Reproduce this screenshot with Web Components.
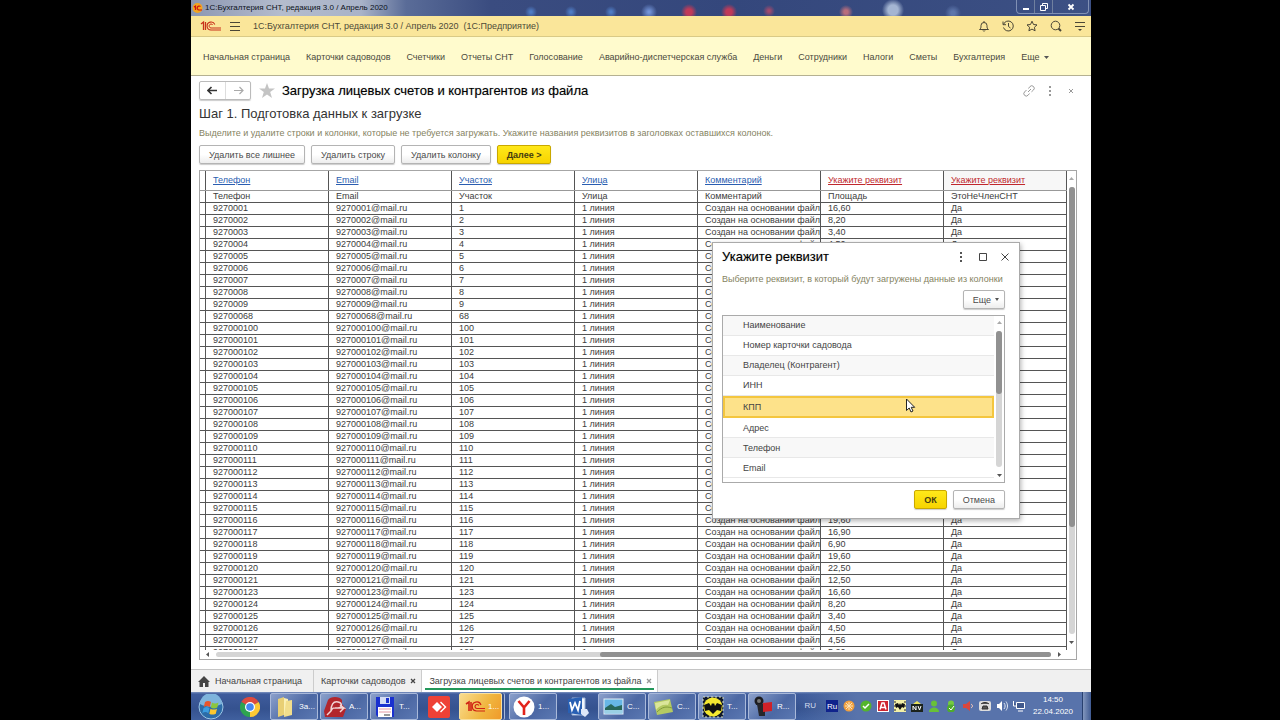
<!DOCTYPE html>
<html lang="ru">
<head>
<meta charset="utf-8">
<meta name="viewport" content="width=device-width, initial-scale=1">
<title>1С:Бухгалтерия СНТ, редакция 3.0 / Апрель 2020</title>
<style>
  body {
    margin: 0;
    height: 100vh;
    display: grid;
    grid-template-columns: 191px minmax(0, 1fr) 189px;
    background: #000;
    font-family: "Liberation Sans", Arial, sans-serif;
    font-size: 9px;
    line-height: 12px;
    color: #444;
    overflow: hidden;
  }
  desktop-screen {
    grid-column: 2;
  }
</style>
</head>
<body>
<desktop-screen>
  <window-title slot="top">1С:Бухгалтерия СНТ, редакция 3.0 / Апрель 2020</window-title>
  <app-bar slot="top">1С:Бухгалтерия СНТ, редакция 3.0 / Апрель 2020&nbsp; (1С:Предприятие)</app-bar>
  <section-nav slot="top"></section-nav>
  <form-page>
    <span slot="title">Загрузка лицевых счетов и контрагентов из файла</span>
    <span slot="step">Шаг 1. Подготовка данных к загрузке</span>
    <span slot="hint">Выделите и удалите строки и колонки, которые не требуется загружать. Укажите названия реквизитов в заголовках оставшихся колонок.</span>
    <push-button slot="actions">Удалить все лишнее</push-button>
    <push-button slot="actions">Удалить строку</push-button>
    <push-button slot="actions">Удалить колонку</push-button>
    <push-button slot="actions" primary>Далее &gt;</push-button>
    <data-grid></data-grid>
  </form-page>
  <field-dialog slot="overlay"></field-dialog>
  <open-tabs slot="bottom"></open-tabs>
  <task-bar slot="bottom"></task-bar>
</desktop-screen>

<script>
class BaseElement extends HTMLElement {
  constructor() {
    super();
    this.shadowDOM = this.attachShadow({ mode: 'open' });
    this.shadowDOM.innerHTML = this.render();
  }
}

class DesktopScreen extends BaseElement {
  render() {
    return `
      <style>
        :host {
          display: flex;
          flex-direction: column;
          position: relative;
          min-width: 0;
          height: 100vh;
          background: #fff;
        }
        main {
          flex: 1;
          min-height: 0;
          display: flex;
        }
      </style>
      <slot name="top"></slot>
      <main><slot></slot></main>
      <slot name="bottom"></slot>
      <slot name="overlay"></slot>
    `;
  }
}

class WindowTitle extends BaseElement {
  render() {
    return `
      <style>
        :host {
          display: flex;
          align-items: center;
          height: 16px;
          padding-left: 1px;
          box-sizing: border-box;
          font-size: 8px;
          color: #0c1220;
          background:
            radial-gradient(circle at 458px 12px, #7394d8 1px, transparent 8px),
            radial-gradient(circle at 498px 12px, #c03a58 3px, transparent 8px),
            radial-gradient(circle at 538px 12px, #c03a58 3px, transparent 8px),
            radial-gradient(circle at 578px 11px, #a34a6c 1px, transparent 6px),
            radial-gradient(circle at 655px 12px, #b86d7c 2px, transparent 7px),
            radial-gradient(circle at 702px 10px, #a4b5d2 5px, transparent 11px),
            radial-gradient(circle at 762px 13px, #5d76ab 2px, transparent 8px),
            radial-gradient(circle at 340px 12px, #4f7cc4 1px, transparent 6px),
            radial-gradient(circle at 380px 12px, #4f7cc4 1px, transparent 6px),
            radial-gradient(circle at 420px 12px, #4f7cc4 1px, transparent 6px),
            radial-gradient(ellipse at 240px 10px, #1e2b54 4px, transparent 26px),
            linear-gradient(90deg, #8c97b2 0, #b4bccd 90px, #a9b3c8 170px, #5a6c98 215px, #3a4c80 300px, #34477c 60%, #3c5084 100%);
        }
        svg {
          display: block;
          flex: none;
          margin-right: 2px;
        }
        .text {
          flex: 1;
          white-space: nowrap;
        }
        .controls {
          display: flex;
          height: 13px;
          align-self: flex-start;
          margin-right: 2px;
          border: 1px solid #8090b4;
          border-top: 0;
          border-radius: 0 0 4px 4px;
        }
        button {
          display: grid;
          place-items: center;
          width: 18px;
          padding: 0;
          border: 0;
          border-right: 1px solid #70809f;
          background: none;
        }
        button:last-child {
          width: 35px;
          border-right: 0;
        }
        button svg {
          margin: 0;
        }
      </style>
      <svg width="11" height="12" viewBox="0 0 11 12">
        <circle cx="5.500" cy="6" r="5" fill="#f3a51f"/>
        <path d="M2 5l1.500-1v4M8.500 4.500a2 2 0 1 0-1.500 3.500h3" fill="none" stroke="#c11" stroke-width="1.200"/>
      </svg>
      <span class="text"><slot></slot></span>
      <div class="controls">
        <button aria-label="Свернуть"><svg width="10" height="10"><path d="M2 7h6" stroke="#fff" stroke-width="2"/></svg></button>
        <button aria-label="Восстановить"><svg width="10" height="10"><path d="M3.500 3V1.500h5v5H7M1.500 3.500h5v5h-5z" fill="none" stroke="#fff"/></svg></button>
        <button aria-label="Закрыть"><svg width="10" height="10"><path d="M2.500 2.500l5 5M7.500 2.500l-5 5" stroke="#fff" stroke-width="1.800"/></svg></button>
      </div>
    `;
  }
}

class AppBar extends BaseElement {
  render() {
    return `
      <style>
        :host {
          display: flex;
          align-items: center;
          height: 21px;
          box-sizing: border-box;
          padding: 0 5px 0 9px;
          background: #fae69a;
          border-bottom: 1px solid #d9ca86;
          color: #4d4a38;
        }
        svg {
          display: block;
          fill: none;
          stroke: #4a4636;
        }
        .menu {
          margin: 0 12px 0 7px;
        }
        .text {
          flex: 1;
          white-space: nowrap;
        }
        button {
          padding: 0;
          border: 0;
          background: none;
        }
        .tools {
          display: flex;
          gap: 12px;
        }
      </style>
      <svg width="22" height="12" viewBox="0 0 22 12" style="stroke:#c8301c">
        <path d="M1 4l2.500-2v8M5.500 2v8" stroke-width="1.300"/>
        <path d="M14.800 4.500a4 4 0 1 0-3.800 5.500h10" stroke-width="1.100"/>
        <path d="M12.800 5a2 2 0 1 0-1.800 3h10" stroke-width="1"/>
      </svg>
      <button class="menu" aria-label="Меню"><svg width="12" height="12"><path d="M1 2.500h10M1 6.500h10M1 10.500h10"/></svg></button>
      <span class="text"><slot></slot></span>
      <div class="tools">
        <button aria-label="Уведомления"><svg width="12" height="12"><path d="M1.500 9.500c1.500-1 1.500-2 1.500-4a3 3 0 0 1 6 0c0 2 0 3 1.500 4zM5 10.500c.5 1 1.500 1 2 0M6 1v1.500"/></svg></button>
        <button aria-label="История"><svg width="12" height="12"><path d="M1.500 4.500a5 5 0 1 1 0 3M1 1.500v3.200h3M6.500 3v3.500l2 1.500"/></svg></button>
        <button aria-label="Избранное"><svg width="12" height="12"><path d="M6 1.200l1.500 3.300 3.500.4-2.600 2.400.7 3.500L6 9.100 2.900 10.800l.7-3.500L1 4.900l3.500-.4z"/></svg></button>
        <button aria-label="Поиск"><svg width="12" height="12"><circle cx="5.500" cy="5.500" r="4.300"/><path d="M8.500 8.500l2.500 2.500" stroke-width="2"/></svg></button>
        <button aria-label="Сервис"><svg width="12" height="12"><path d="M1 2.500h10M1 6.500h10"/><path d="M4 9h4l-2 2z" fill="#4a4636" stroke="none"/></svg></button>
      </div>
    `;
  }
}

class SectionNav extends BaseElement {
  render() {
    const sections = ['Начальная страница', 'Карточки садоводов', 'Счетчики', 'Отчеты СНТ', 'Голосование',
      'Аварийно-диспетчерская служба', 'Деньги', 'Сотрудники', 'Налоги', 'Сметы', 'Бухгалтерия'];
    return `
      <style>
        :host {
          display: block;
          background: #fffbcd;
          border-bottom: 1px solid #b5b192;
        }
        nav {
          display: flex;
          align-items: center;
          gap: 16px;
          box-sizing: border-box;
          height: 38px;
          padding: 2px 0 0 12px;
          white-space: nowrap;
        }
        a, button {
          color: #4b4a3d;
          text-decoration: none;
        }
        button {
          display: flex;
          align-items: center;
          gap: 4px;
          padding: 0;
          border: 0;
          background: none;
          font: inherit;
        }
      </style>
      <nav>
        ${sections.map((name) => `<a href="#">${name}</a>`).join('')}
        <button>Еще <svg width="5" height="3"><path d="M0 0h5l-2.500 3z" fill="#555"/></svg></button>
      </nav>
    `;
  }
}

class PushButton extends BaseElement {
  render() {
    return `
      <style>
        :host {
          display: block;
        }
        button {
          display: flex;
          align-items: center;
          gap: 4px;
          height: 19px;
          box-sizing: border-box;
          padding: 0 9px;
          border: 1px solid #b4b4b4;
          border-radius: 2px;
          background: linear-gradient(#fff 50%, #ededed);
          box-shadow: 0 1px 1px #ccc;
          font: inherit;
          color: #4a4a4a;
          white-space: nowrap;
        }
        :host([menu]) button {
          padding: 0 5px 0 9px;
        }
        :host([primary]) button {
          border-color: #c9a800;
          background: linear-gradient(#ffe81a, #f7d400);
          color: #443c10;
          font-weight: bold;
        }
      </style>
      <button><slot></slot></button>
    `;
  }
}

class FormPage extends BaseElement {
  render() {
    return `
      <style>
        :host {
          flex: 1;
          min-width: 0;
          display: flex;
          flex-direction: column;
          padding: 5px 14px 9px 8px;
        }
        header {
          display: flex;
          align-items: center;
          height: 19px;
        }
        .history {
          display: flex;
          height: 19px;
          box-sizing: border-box;
          border: 1px solid #bbb;
          border-radius: 2px;
          box-shadow: 0 1px 1px #ccc;
        }
        .history button {
          width: 25px;
        }
        .history button + button {
          border-left: 1px solid #ddd;
        }
        button {
          display: grid;
          place-items: center;
          padding: 0;
          border: 0;
          background: none;
        }
        .star {
          margin: 0 7px 0 8px;
        }
        h1, h2, p {
          margin: 0;
          font-weight: normal;
          white-space: nowrap;
        }
        h1 {
          flex: 1;
          font-size: 13px;
          color: #000;
          text-shadow: 0 0 1px #aaa;
        }
        h2 {
          margin-top: 5px;
          font-size: 13px;
          line-height: 18px;
          color: #333;
        }
        p {
          margin-top: 4px;
          color: #85835f;
        }
        .tools {
          display: flex;
          gap: 9px;
        }
        .actions {
          display: flex;
          gap: 6px;
          margin: 6px 0;
        }
      </style>
      <header>
        <div class="history">
          <button aria-label="Назад"><svg width="11" height="9"><path d="M1 4.500h9M4.500 1L1 4.500 4.500 8" fill="none" stroke="#333" stroke-width="1.600"/></svg></button>
          <button aria-label="Вперед"><svg width="11" height="9"><path d="M1 4.500h9M6.500 1L10 4.500 6.500 8" fill="none" stroke="#aaa" stroke-width="1.200"/></svg></button>
        </div>
        <button class="star" aria-label="В избранное"><svg width="16" height="15"><path d="M8 0l2 5.500h6l-4.800 3.500L13 15l-5-3.500L3 15l1.800-6L0 5.500h6z" fill="#c4c4c4"/></svg></button>
        <h1><slot name="title"></slot></h1>
        <div class="tools">
          <button aria-label="Ссылка"><svg width="12" height="12" fill="none" stroke="#999"><path d="M5 7L8 4M5.500 3.500l1.500-2a2.400 2.400 0 0 1 3.500 3.500L8.500 6.800M6.500 8.500L5 10.300A2.400 2.400 0 0 1 1.500 7l2-2"/></svg></button>
          <button aria-label="Еще"><svg width="12" height="12" fill="#999"><path d="M5 1h2v2H5zM5 5h2v2H5zM5 9h2v2H5z"/></svg></button>
          <button aria-label="Закрыть"><svg width="12" height="12" stroke="#999"><path d="M4 4l4 4M8 4l-4 4"/></svg></button>
        </div>
      </header>
      <h2><slot name="step"></slot></h2>
      <p><slot name="hint"></slot></p>
      <div class="actions"><slot name="actions"></slot></div>
      <slot></slot>
    `;
  }
}

class DataGrid extends BaseElement {
  render() {
    const columns = ['Телефон', 'Email', 'Участок', 'Улица', 'Комментарий'];
    const plots = [1, 2, 3, 4, 5, 6, 7, 8, 9, 68];
    for (let n = 100; n <= 128; n++) {
      if (n !== 122) plots.push(n);
    }
    const areas = {
      1: '16,60', 2: '8,20', 3: '3,40', 4: '4,50', 116: '19,60', 117: '16,90', 118: '6,90', 119: '19,60',
      120: '22,50', 121: '12,50', 123: '16,60', 124: '8,20', 125: '3,40', 126: '4,50', 127: '4,56', 128: '5,20'
    };
    const rows = plots.map((n) => {
      const phone = '927000' + n;
      return [phone, phone + '@mail.ru', n, '1 линия', 'Создан на основании файл', areas[n] || '', 'Да'];
    });
    rows.unshift([...columns, 'Площадь', 'ЭтоНеЧленСНТ']);
    return `
      <style>
        :host {
          flex: 1;
          min-height: 0;
          display: grid;
          grid-template-columns: minmax(0, 1fr) 9px;
          grid-template-rows: minmax(0, 1fr) 9px;
          border: 1px solid #a6a6a6;
        }
        .view {
          overflow: hidden;
        }
        table {
          width: 100%;
          table-layout: fixed;
          border-collapse: collapse;
          line-height: 11px;
          color: #3c3c3c;
        }
        th, td {
          height: 11px;
          padding: 0 0 0 7px;
          border: 1px solid #555;
          border-top: 0;
          font-weight: normal;
          text-align: left;
          white-space: nowrap;
          overflow: hidden;
        }
        th {
          height: 19px;
          border-bottom-color: #999;
        }
        th:last-child {
          background: #f7f7f7;
        }
        th:first-child, td:first-child {
          width: 5px;
          padding: 0;
          border-left: 0;
        }
        a {
          color: #2a5db0;
        }
        a.unset {
          color: #c0272d;
        }
        .vertical, .horizontal {
          display: flex;
          align-items: center;
        }
        .vertical {
          flex-direction: column;
          padding: 6px 0;
          gap: 7px;
        }
        .horizontal {
          padding: 0 6px;
          gap: 7px;
        }
        .track {
          flex: 1;
          display: flex;
          border-radius: 3px;
          background: #d5d5d5;
        }
        .vertical .track {
          width: 6px;
          flex-direction: column;
        }
        .horizontal .track {
          height: 5px;
          justify-content: flex-end;
        }
        .thumb {
          border-radius: 3px;
          background: #919191;
        }
        .vertical .thumb {
          height: 76%;
        }
        .horizontal .thumb {
          width: 54%;
        }
      </style>
      <div class="view">
        <table>
          <thead>
            <tr>
              <th></th>
              ${columns.map((name) => `<th><a href="#">${name}</a></th>`).join('')}
              <th><a class="unset" href="#">Укажите реквизит</a></th>
              <th><a class="unset" href="#">Укажите реквизит</a></th>
            </tr>
          </thead>
          <tbody>
            ${rows.map((row) => `<tr><td></td>${row.map((cell) => `<td>${cell}</td>`).join('')}</tr>`).join('')}
          </tbody>
        </table>
      </div>
      <div class="vertical">
        <svg width="5" height="3"><path d="M0 3h5L2.500 0z" fill="#aaa"/></svg>
        <div class="track"><div class="thumb"></div></div>
        <svg width="5" height="3"><path d="M0 0h5L2.500 3z" fill="#555"/></svg>
      </div>
      <div class="horizontal">
        <svg width="3" height="5"><path d="M3 0v5L0 2.500z" fill="#555"/></svg>
        <div class="track"><div class="thumb"></div></div>
        <svg width="3" height="5"><path d="M0 0v5l3-2.500z" fill="#555"/></svg>
      </div>
    `;
  }
}

class FieldDialog extends BaseElement {
  render() {
    const fields = ['Наименование', 'Номер карточки садовода', 'Владелец (Контрагент)', 'ИНН', 'КПП', 'Адрес', 'Телефон', 'Email'];
    return `
      <style>
        :host {
          position: absolute;
          left: 521px;
          top: 242px;
          width: 308px;
          height: 277px;
          box-sizing: border-box;
          display: flex;
          flex-direction: column;
          padding: 5px 14px 9px 9px;
          background: #fff;
          border: 1px solid #aaa;
          box-shadow: 1px 2px 5px rgba(0, 0, 0, 0.3);
        }
        header {
          display: flex;
          align-items: center;
          gap: 10px;
          height: 18px;
          margin-right: -6px;
        }
        h2 {
          flex: 1;
          margin: 0;
          font-size: 13px;
          font-weight: normal;
          color: #000;
          text-shadow: 0 0 1px #aaa;
        }
        header button {
          display: grid;
          padding: 0;
          border: 0;
          background: none;
        }
        p {
          margin: 7px 0 5px;
          color: #85835f;
          white-space: nowrap;
        }
        .more {
          align-self: flex-end;
        }
        .list {
          flex: 1;
          display: flex;
          min-height: 0;
          margin: 6px 0 7px;
          border: 1px solid #aaa;
        }
        ul {
          flex: 1;
          display: flex;
          flex-direction: column;
          margin: 0;
          padding: 0 0 4px;
          list-style: none;
        }
        li {
          flex: 1;
          display: flex;
          align-items: center;
          box-sizing: border-box;
          padding-left: 20px;
          border-bottom: 1px solid #e8e8e8;
        }
        li:nth-child(odd) {
          background: #f8f8f8;
        }
        li[aria-selected="true"] {
          padding-left: 18px;
          border: 2px solid #f4c63e;
          background: #fde28a;
        }
        .scroll {
          display: flex;
          flex-direction: column;
          align-items: center;
          gap: 7px;
          width: 10px;
          padding: 5px 0;
        }
        .track {
          flex: 1;
          width: 6px;
          border-radius: 3px;
          background: #d5d5d5;
        }
        .thumb {
          height: 46%;
          border-radius: 3px;
          background: #919191;
        }
        footer {
          display: flex;
          justify-content: flex-end;
          gap: 6px;
        }
        .cursor {
          position: absolute;
          left: 192px;
          top: 155px;
        }
      </style>
      <header>
        <h2>Укажите реквизит</h2>
        <button aria-label="Еще"><svg width="12" height="12" fill="#555"><path d="M5 1h2v2H5zM5 5h2v2H5zM5 9h2v2H5z"/></svg></button>
        <button aria-label="Развернуть"><svg width="12" height="12"><path d="M2.500 2.500h7v7h-7z" fill="none" stroke="#444"/></svg></button>
        <button aria-label="Закрыть"><svg width="12" height="12"><path d="M2.500 2.500l7 7M9.500 2.500l-7 7" stroke="#444"/></svg></button>
      </header>
      <p>Выберите реквизит, в который будут загружены данные из колонки</p>
      <push-button class="more" menu>Еще<svg width="4" height="3"><path d="M0 0h4L2 3z" fill="#555"/></svg></push-button>
      <div class="list">
        <ul role="listbox" aria-label="Реквизиты">
          ${fields.map((name) => `<li role="option" aria-selected="${name === 'КПП'}">${name}</li>`).join('')}
        </ul>
        <div class="scroll">
          <svg width="5" height="3"><path d="M0 3h5L2.500 0z" fill="#aaa"/></svg>
          <div class="track"><div class="thumb"></div></div>
          <svg width="5" height="3"><path d="M0 0h5L2.500 3z" fill="#555"/></svg>
        </div>
      </div>
      <footer>
        <push-button primary>ОК</push-button>
        <push-button>Отмена</push-button>
      </footer>
      <svg class="cursor" width="12" height="16"><path d="M1.500 1v11.500l2.700-2.500 1.800 4 2-1-1.800-3.700h3.500z" fill="#fff" stroke="#222"/></svg>
    `;
  }
}

class OpenTabs extends BaseElement {
  render() {
    const close = (color) => `<button aria-label="Закрыть"><svg width="6" height="6"><path d="M1 1l4 4M5 1L1 5" stroke="${color}" stroke-width="1.300"/></svg></button>`;
    return `
      <style>
        :host {
          display: flex;
          height: 22px;
          border-top: 1px solid #c4c4c4;
          background: #f0f0f0;
          white-space: nowrap;
        }
        .tab {
          display: flex;
          align-items: center;
          gap: 5px;
          padding: 0 5px 0 7px;
          border-right: 1px solid #ccc;
        }
        .tab.home {
          padding-right: 11px;
        }
        .tab.active {
          background: #fff linear-gradient(#23975a, #23975a) 3px 18px / calc(100% - 6px) 2px no-repeat;
        }
        a {
          color: #444;
          text-decoration: none;
        }
        button {
          display: grid;
          padding: 0;
          border: 0;
          background: none;
        }
      </style>
      <div class="tab home">
        <svg width="12" height="11"><path d="M6 0L0 6h1.500v5H5V7h2v4h3.500V6H12z" fill="#444"/></svg>
        <a href="#">Начальная страница</a>
      </div>
      <div class="tab"><a href="#">Карточки садоводов</a>${close('#444')}</div>
      <div class="tab active"><a href="#">Загрузка лицевых счетов и контрагентов из файла</a>${close('#999')}</div>
    `;
  }
}

class TaskButton extends BaseElement {
  render() {
    return `
      <style>
        :host {
          display: flex;
          flex: none;
          width: 50px;
          font-size: 8px;
        }
        :host([pinned]) {
          width: 39px;
        }
        button {
          flex: 1;
          display: grid;
          grid-template-columns: 22px auto;
          gap: 3px;
          align-items: center;
          justify-content: start;
          min-width: 0;
          margin: 1px 1px 0 1px;
          padding: 0 0 0 3px;
          border: 1px solid #a9b9da;
          border-radius: 2px;
          background: linear-gradient(135deg, #8ba0cb, #4c68a4 60%, #5b78b2);
          font: inherit;
          color: #fff;
        }
        ::slotted(svg) {
          display: block;
          justify-self: center;
        }
        :host([pinned]) button {
          grid-template-columns: auto;
          justify-content: center;
          padding: 0;
          border-color: transparent;
          background: none;
        }
        :host([active]) button {
          margin-right: 6px;
          border-color: #f7e0a0;
          background: linear-gradient(120deg, #f9dc8e, #f0b53e 60%, #f09a2a);
          box-shadow: 2px 0 0 #34508c, 3px 0 0 #a9b9da;
        }
      </style>
      <button><slot name="icon"></slot><slot></slot></button>
    `;
  }
}

class TaskBar extends BaseElement {
  render() {
    return `
      <style>
        :host {
          display: flex;
          align-items: stretch;
          height: 28px;
          background: linear-gradient(#7d93c0 0, #3f5c9c 2px, #35528f 60%, #40609f);
          color: #fff;
        }
        svg {
          display: block;
          flex: none;
        }
        .tray {
          flex: 1;
          display: flex;
          align-items: center;
          justify-content: flex-end;
          gap: 5px;
          background: linear-gradient(90deg, transparent, #5873ab 60px);
        }
        .lang {
          margin-right: 5px;
          font-size: 8px;
          color: #d5deef;
        }
        .clock {
          margin: 0 4px 0 3px;
          font-size: 8px;
          text-align: center;
        }
        .peek {
          align-self: stretch;
          width: 9px;
          padding: 0;
          border: 0;
          border-left: 1px solid #28406f;
          background: linear-gradient(90deg, #8296bd, #3f5a92);
        }
      </style>
      <task-button pinned><svg slot="icon" width="26" height="26">
        <circle cx="13" cy="13" r="12" fill="#2c6ca8" stroke="#9cc5e4"/>
        <path d="M2 10a11 11 0 0 1 22 0c-6 3-15 4-22 0" fill="#7eb4dc"/>
        <path d="M7 8c2-1.500 4-1.500 6 0l-1.200 5c-2-1.500-4-1.500-6 0z" fill="#e8552b"/><path d="M14 8.500c2 1.200 4 1.200 6.500 0l-1.200 5c-2.500 1.200-4.500 1.200-6.500 0z" fill="#8cc63e"/>
        <path d="M5.500 14.200c2-1.500 4-1.500 6 0l-1.200 5c-2-1.500-4-1.500-6 0z" fill="#3c9de0"/><path d="M12.500 14.700c2 1.200 4 1.200 6.500 0l-1.200 5c-2.500 1.200-4.500 1.200-6.500 0z" fill="#fbc72e"/>
      </svg></task-button>
      <task-button pinned><svg slot="icon" width="20" height="20" viewBox="0 0 20 20">
        <path d="M10 10L1.300 5A10 10 0 0 1 18.700 5z" fill="#dd4b3e"/><path d="M10 10L18.700 5A10 10 0 0 1 10 20z" fill="#fcc934"/><path d="M10 10v10A10 10 0 0 1 1.300 5z" fill="#2ea350"/>
        <circle cx="10" cy="10" r="5" fill="#fff"/><circle cx="10" cy="10" r="3.800" fill="#4587f0"/>
      </svg></task-button>
      <task-button><svg slot="icon" width="18" height="22">
        <path d="M2 3l6-2v18l-6 2z" fill="#e8cf74"/><path d="M8 2l4 1v14l-4 3z" fill="#fbf0b4"/><path d="M10 5l6-1v15l-8 2z" fill="#f2de8c"/>
      </svg>За...</task-button>
      <task-button><svg slot="icon" width="22" height="22">
        <path d="M4 4C6 0 16 0 18 4v4l4 5-3 8H1l-1-6z" fill="#b2262c"/><path d="M3 19l4-4c0-6 2-10 7-9s4 6 0 6-5-1-7 3M11 12h9l-4-3M20 12l-4 4" fill="none" stroke="#f1d4d4" stroke-width="1.500"/>
      </svg>A...</task-button>
      <task-button><svg slot="icon" width="20" height="22">
        <path d="M1 1h18v20H3l-2-2z" fill="#1a31cf"/><path d="M5 1h10v7H5z" fill="#d4dcf4"/><path d="M11 2h3v5h-3z" fill="#1a31cf"/><path d="M3 11h14v10H3z" fill="#fff"/><path d="M4 13h12M4 16h12" stroke="#e49aa4"/><path d="M9 19h6" stroke="#333"/>
      </svg>T...</task-button>
      <task-button pinned><svg slot="icon" width="22" height="22">
        <rect width="22" height="22" rx="2" fill="#ee4136"/><path d="M9 6l5 5-5 5-5-5z" fill="#fff"/><path d="M12 6.500l1-1 5.500 5.500-5.500 5.500-1-1 4.500-4.500z" fill="#fff"/>
      </svg></task-button>
      <task-button active><svg slot="icon" width="21" height="20">
        <path d="M2 7l3-2v9M7 5v9" fill="none" stroke="#d02314" stroke-width="1.600"/><path d="M17 8a4.500 4.500 0 1 0-4 6h8M14.800 8.500a2 2 0 1 0-1.800 3h8" fill="none" stroke="#d02314" stroke-width="1.200"/>
      </svg>1...</task-button>
      <task-button><svg slot="icon" width="22" height="22">
        <circle cx="11" cy="11" r="10.500" fill="#fff"/><path d="M5.500 5l5.500 6.500V19M16.500 5L11 11.500" fill="none" stroke="#e2231a" stroke-width="2.600"/>
      </svg>1...</task-button>
      <task-button pinned><svg slot="icon" width="22" height="22">
        <path d="M5 2h13v17H5z" fill="#f2f6fc" stroke="#9db4d8"/><path d="M1 3l14-2v18L1 17z" fill="#2860b4"/><path d="M3 6l2 8 3-7 3 7 2-9" fill="none" stroke="#fff" stroke-width="1.800"/><path d="M14 13h6l2 4-4 4-4-3z" fill="#dfe8f8"/>
      </svg></task-button>
      <task-button><svg slot="icon" width="21" height="20">
        <rect x="1" y="2" width="19" height="15" fill="#67b6e6" stroke="#e4eef6"/><path d="M2 11l6-4 4 3 7-2v8H2z" fill="#28665a"/><path d="M2 13h17v3H2z" fill="#9ad0e4"/>
      </svg>C...</task-button>
      <task-button><svg slot="icon" width="21" height="20">
        <path d="M1 5l16-3 3 13-16 3z" fill="#b4ca62"/><path d="M2 6l15-3-2 5c-5-1-9 1-12 5z" fill="#dbe69a"/><path d="M4 15c5-5 9-6 15-4" fill="none" stroke="#829c3a"/>
      </svg>C...</task-button>
      <task-button><svg slot="icon" width="22" height="22">
        <path d="M1 1h20v20H1z" fill="#10182a" stroke="#dbe2c0" stroke-dasharray="2 2"/><circle cx="11" cy="11" r="9.500" fill="#f5e830"/><path d="M2 9l5-2 2 3 1-3 1 1 1-1 1 3 2-3 5 2-1 6-4-1-4 4-4-4-4 1z" fill="#111"/>
      </svg>T...</task-button>
      <task-button><svg slot="icon" width="21" height="22">
        <circle cx="6" cy="5" r="4.500" fill="#1c1c20"/><path d="M4 8h8v12H6z" fill="#26262b"/><path d="M10 7l9-1v9l-9 1z" fill="#cf2128"/><circle cx="6" cy="5" r="2" fill="#777"/>
      </svg>R...</task-button>
      <div class="tray">
        <span class="lang">RU</span>
        <svg width="12" height="12"><rect width="12" height="12" fill="#10238c"/><text x="1" y="9" font-size="8" fill="#fff">Ru</text></svg>
        <svg width="12" height="12"><circle cx="6" cy="6" r="5.500" fill="#f0a040"/><path d="M6 2v8M2 6h8M3 3l6 6M9 3L3 9" stroke="#fbe4b8"/></svg>
        <svg width="12" height="12"><circle cx="6" cy="6" r="5.500" fill="#54b52c"/><path d="M3 6l2 2 4-4" fill="none" stroke="#fff" stroke-width="1.500"/></svg>
        <svg width="12" height="12"><rect width="12" height="12" fill="#fff"/><rect x="1" y="1" width="10" height="10" fill="#cf2630"/><path d="M3 9.500L5 3h2l2 6.500M4 7.500h4" fill="none" stroke="#fff" stroke-width="1.500"/></svg>
        <svg width="12" height="12"><rect width="12" height="12" fill="#f3f0a8"/><path d="M1 1v10M11 1v10" stroke="#222" stroke-dasharray="2 2"/><path d="M1 4l3-1 1 2 1-2 1 2 1-2 3 1-1 4-2-1-2 3-2-3-2 1z" fill="#111"/></svg>
        <svg width="12" height="12"><rect y="4" width="12" height="8" fill="#1b231c"/><path d="M2 4l4-3 4 3z" fill="#e9e25c"/><path d="M2 10V6l3 4V6M7 6l1.500 4L10 6" fill="none" stroke="#fff"/></svg>
        <svg width="12" height="12" fill="#68c138"><circle cx="6" cy="3.500" r="3"/><path d="M1 12c0-6 10-6 10 0z"/></svg>
        <svg width="12" height="12"><circle cx="6" cy="3.500" r="3" fill="#74ca40"/><circle cx="6" cy="8.500" r="4" fill="#4eac2c"/><path d="M4 8l2 2 3-4" fill="none" stroke="#fff"/></svg>
        <svg width="12" height="12"><path d="M1 4h3l4-3v10L4 8H1z" fill="#d9463c"/><path d="M9 4c2 1 2 3 0 4" fill="none" stroke="#e8c0b8"/></svg>
        <svg width="12" height="12"><rect y="1" width="12" height="10" rx="2" fill="#ddd"/><path d="M2 4c2-2 6-2 8 0M3 9l1-3h4l1 3z" fill="#555" stroke="#333"/></svg>
        <svg width="12" height="12"><path d="M1 4h2l3-3v10L3 8H1z" fill="#fff"/><path d="M8 3c1.500 2 1.500 4 0 6M10 1.500c2 3 2 6 0 9" fill="none" stroke="#dfe6f2"/></svg>
        <svg width="12" height="12"><path d="M3.500 2.500h8v6h-8zM5 11h5M.5 1v5h3" fill="#41598c" stroke="#fff"/></svg>
        <div class="clock">14:50<br>22.04.2020</div>
        <button class="peek" aria-label="Свернуть все окна"></button>
      </div>
    `;
  }
}

customElements.define('desktop-screen', DesktopScreen);
customElements.define('window-title', WindowTitle);
customElements.define('app-bar', AppBar);
customElements.define('section-nav', SectionNav);
customElements.define('push-button', PushButton);
customElements.define('form-page', FormPage);
customElements.define('data-grid', DataGrid);
customElements.define('field-dialog', FieldDialog);
customElements.define('open-tabs', OpenTabs);
customElements.define('task-button', TaskButton);
customElements.define('task-bar', TaskBar);
</script>
</body>
</html>
